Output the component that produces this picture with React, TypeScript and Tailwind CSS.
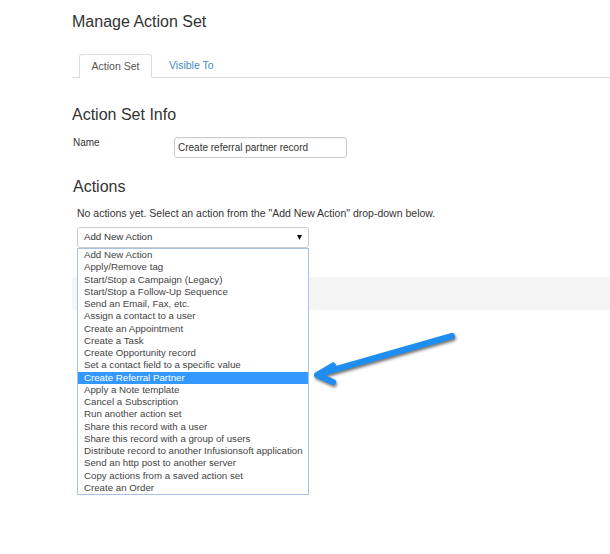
// Manage Action Set – open "Add New Action" drop-down with callout arrow
const actions = [
  'Add New Action',
  'Apply/Remove tag',
  'Start/Stop a Campaign (Legacy)',
  'Start/Stop a Follow-Up Sequence',
  'Send an Email, Fax, etc.',
  'Assign a contact to a user',
  'Create an Appointment',
  'Create a Task',
  'Create Opportunity record',
  'Set a contact field to a specific value',
  'Create Referral Partner',
  'Apply a Note template',
  'Cancel a Subscription',
  'Run another action set',
  'Share this record with a user',
  'Share this record with a group of users',
  'Distribute record to another Infusionsoft application',
  'Send an http post to another server',
  'Copy actions from a saved action set',
  'Create an Order',
];

const selected = 'Create Referral Partner';

export default function App() {
  return (
    <div
      className="relative w-[610px] h-[554px] overflow-hidden bg-white text-[#333]"
      style={{ fontFamily: '"Liberation Sans", Arial, sans-serif' }}
    >
      <div className="pl-[72px] pt-[12px]">
        <h1 className="text-[16px] leading-[20px] font-normal">Manage Action Set</h1>

        {/* 탭 */}
        <div className="mt-[22px] flex h-[24px] border-b border-[#ddd]">
          <div className="ml-[7px] -mb-px flex w-[73px] items-center justify-center rounded-t-[3px] border border-b-0 border-[#ddd] bg-white text-[10.5px] text-[#555]">
            Action Set
          </div>
          <div className="ml-[17px] flex items-center text-[10.5px] text-[#428bca]">Visible To</div>
        </div>

        <h2 className="mt-[27px] text-[16px] leading-[20px] font-normal">Action Set Info</h2>

        <div className="mt-[12px] flex items-start">
          <label className="w-[102px] pl-px text-[10px] leading-[12px]">Name</label>
          <div className="flex h-[21px] w-[173px] items-center rounded-[3px] border border-[#ccc] px-[3px] text-[10px] shadow-[inset_0_1px_1px_rgba(0,0,0,0.05)]">
            Create referral partner record
          </div>
        </div>

        <h2 className="mt-[19px] pl-px text-[16px] leading-[20px] font-normal">Actions</h2>

        <p className="mt-[9px] pl-[5px] text-[10.5px] leading-[14px]">
          No actions yet. Select an action from the "Add New Action" drop-down below.
        </p>

        {/* 셀렉트 + 열린 목록 */}
        <div className="relative z-10 ml-[5px] mt-[7px] w-[232px]">
          <div className="flex h-[21px] items-center justify-between rounded-[3px] border border-[#ccc] bg-white pl-[6px] pr-[6px] text-[9.7px]">
            <span>Add New Action</span>
            <svg width="5" height="5" viewBox="0 0 6 6">
              <path d="M0 0H6L3 6Z" fill="#111" />
            </svg>
          </div>
          <ul className="absolute left-0 top-full w-[232px] border border-[#a9c1e3] bg-white text-[9.7px] text-[#444]">
            {actions.map((a) => (
              <li
                key={a}
                className={`h-[12.25px] whitespace-nowrap pl-[6px] leading-[12.25px] ${
                  a === selected ? 'bg-[#3399ff] text-white' : ''
                }`}
              >
                {a}
              </li>
            ))}
          </ul>
        </div>

        <div className="mt-[29px] h-[33px] rounded-l-[3px] bg-[#f5f5f5]" />
      </div>

      {/* 화살표 */}
      <svg
        className="absolute left-0 top-0 pointer-events-none z-20"
        width="610"
        height="554"
        viewBox="0 0 610 554"
        style={{ filter: 'drop-shadow(1.5px 2px 1.5px rgba(0,0,0,0.55))' }}
      >
        <g stroke="#1f8ef1" strokeWidth="6" strokeLinecap="round" strokeLinejoin="round" fill="none">
          <path d="M452 336L319 374" />
          <path d="M333 365.5L317 375L333 382" />
        </g>
      </svg>
    </div>
  );
}
